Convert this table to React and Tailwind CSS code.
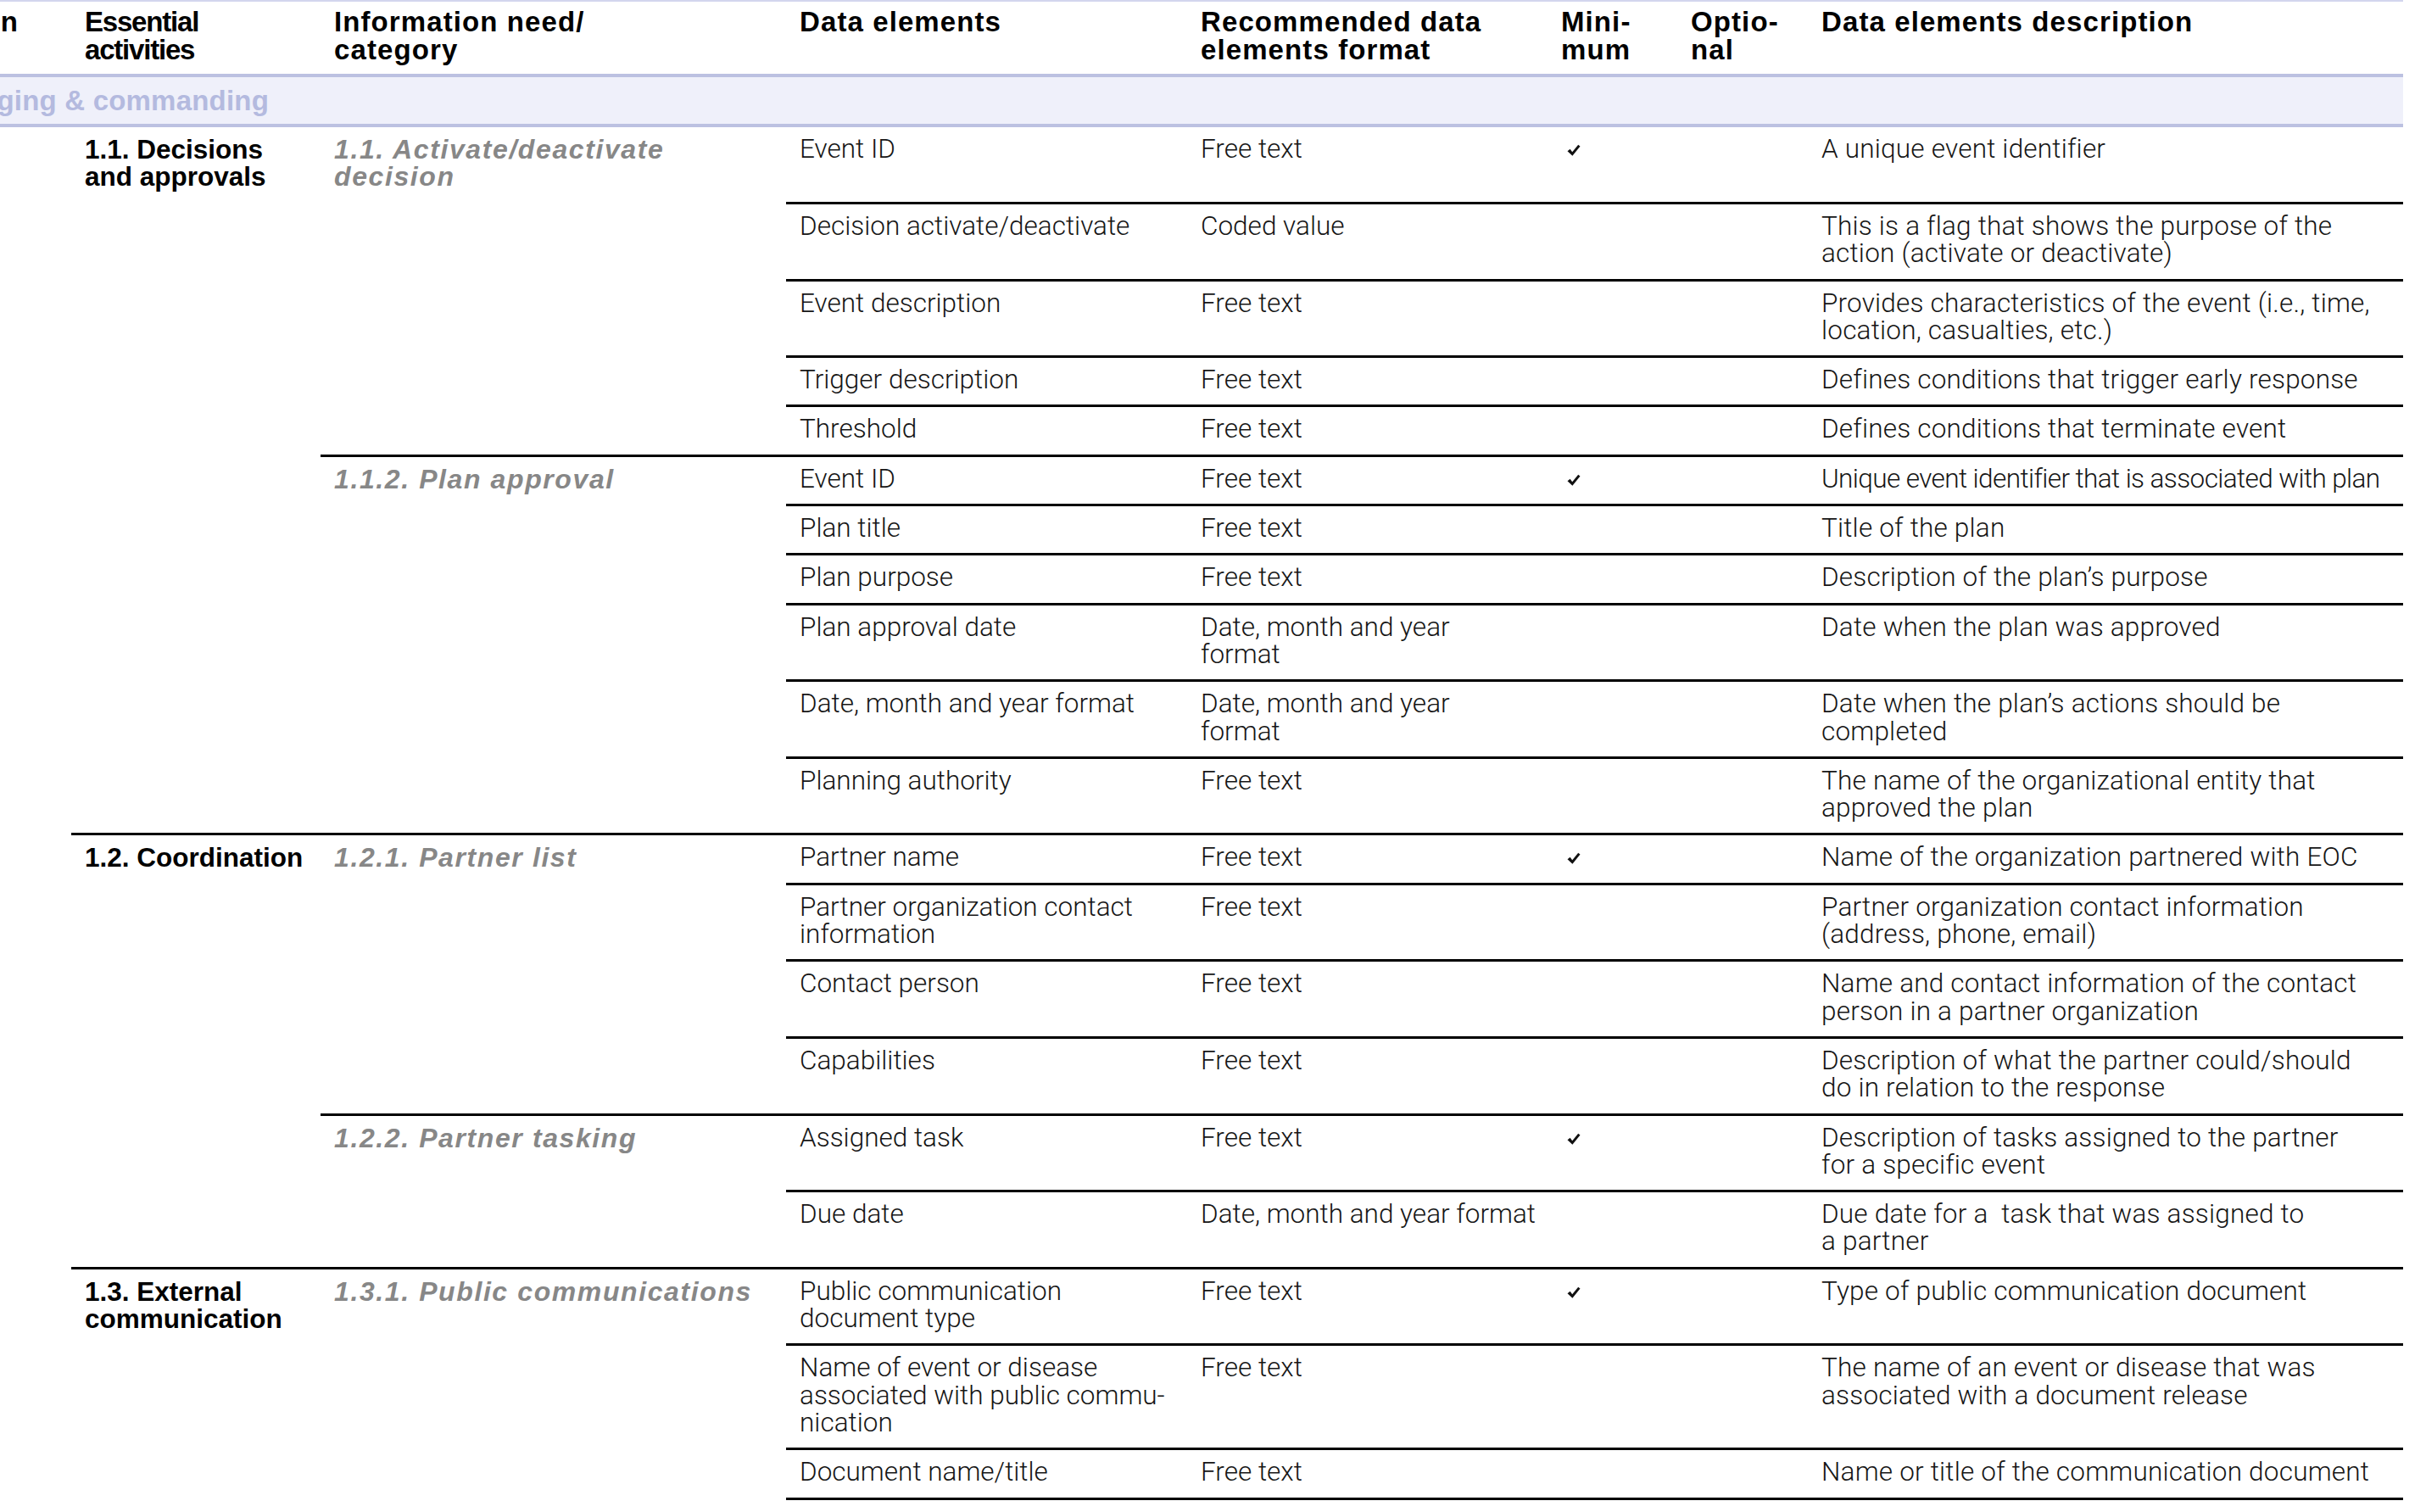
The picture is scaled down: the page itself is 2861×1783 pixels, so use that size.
import React from "react";

const CHECK = (
  <svg width="16" height="15" viewBox="0 0 16 15" className="block">
    <path d="M0.5 8.2 L3.6 5.8 L6.2 9.2 L13.2 0.8 L15.5 2.6 L6.4 13.8 Z" fill="#111" />
  </svg>
);

const data = [
  {
    act: ["1.1. Decisions", "and approvals"],
    subs: [
      {
        cat: ["1.1. Activate/deactivate", "decision"],
        rows: [
          { el: ["Event ID"], fmt: ["Free text"], min: true, desc: ["A unique event identifier"], tall: true },
          { el: ["Decision activate/deactivate"], fmt: ["Coded value"], desc: ["This is a flag that shows the purpose of the", "action (activate or deactivate)"] },
          { el: ["Event description"], fmt: ["Free text"], desc: ["Provides characteristics of the event (i.e., time,", "location, casualties, etc.)"] },
          { el: ["Trigger description"], fmt: ["Free text"], desc: ["Defines conditions that trigger early response"] },
          { el: ["Threshold"], fmt: ["Free text"], desc: ["Defines conditions that terminate event"] },
        ],
      },
      {
        cat: ["1.1.2. Plan approval"],
        rows: [
          { el: ["Event ID"], fmt: ["Free text"], min: true, desc: ["Unique event identifier that is associated with plan"], tight: true },
          { el: ["Plan title"], fmt: ["Free text"], desc: ["Title of the plan"] },
          { el: ["Plan purpose"], fmt: ["Free text"], desc: ["Description of the plan\u2019s purpose"] },
          { el: ["Plan approval date"], fmt: ["Date, month and year", "format"], desc: ["Date when the plan was approved"] },
          { el: ["Date, month and year format"], fmt: ["Date, month and year", "format"], desc: ["Date when the plan\u2019s actions should be", "completed"] },
          { el: ["Planning authority"], fmt: ["Free text"], desc: ["The name of the organizational entity that", "approved the plan"] },
        ],
      },
    ],
  },
  {
    act: ["1.2. Coordination"],
    subs: [
      {
        cat: ["1.2.1. Partner list"],
        rows: [
          { el: ["Partner name"], fmt: ["Free text"], min: true, desc: ["Name of the organization partnered with EOC"] },
          { el: ["Partner organization contact", "information"], fmt: ["Free text"], desc: ["Partner organization contact information", "(address, phone, email)"] },
          { el: ["Contact person"], fmt: ["Free text"], desc: ["Name and contact information of the contact", "person in a partner organization"] },
          { el: ["Capabilities"], fmt: ["Free text"], desc: ["Description of what the partner could/should", "do in relation to the response"] },
        ],
      },
      {
        cat: ["1.2.2. Partner tasking"],
        rows: [
          { el: ["Assigned task"], fmt: ["Free text"], min: true, desc: ["Description of tasks assigned to the partner", "for a specific event"] },
          { el: ["Due date"], fmt: ["Date, month and year format"], desc: ["Due date for a\u00a0 task that was assigned to", "a partner"] },
        ],
      },
    ],
  },
  {
    act: ["1.3. External", "communication"],
    subs: [
      {
        cat: ["1.3.1. Public communications"],
        rows: [
          { el: ["Public communication", "document type"], fmt: ["Free text"], min: true, desc: ["Type of public communication document"] },
          { el: ["Name of event or disease", "associated with public commu-", "nication"], fmt: ["Free text"], desc: ["The name of an event or disease that was", "associated with a document release"] },
          { el: ["Document name/title"], fmt: ["Free text"], desc: ["Name or title of the communication document"], last: true },
        ],
      },
    ],
  },
];

function Lines({ lines }) {
  return (
    <div className="whitespace-nowrap">
      {lines.map((l, i) => (
        <React.Fragment key={i}>
          {i > 0 ? <br /> : null}
          {l}
        </React.Fragment>
      ))}
    </div>
  );
}

const bodyFont = { fontFamily: "Roboto, 'Liberation Sans', sans-serif" };
const boldFont = { fontFamily: "'Liberation Sans', Arial, sans-serif" };

function DataRow({ r, first }) {
  return (
    <div
      className={
        "flex pt-[10px] pb-[13px] text-[31.5px] leading-[32.3px] font-light text-[#161616] " +
        (first ? "" : "border-t-[3px] border-black ") +
        (r.tall ? "min-h-[88px] " : "") +
        (r.last ? "border-b-[3px] border-black" : "")
      }
      style={bodyFont}
    >
      <div className="w-[473px] shrink-0 pl-[16px]">
        <Lines lines={r.el} />
      </div>
      <div className="w-[425px] shrink-0 pl-[16px]">
        <Lines lines={r.fmt} />
      </div>
      <div className="w-[153px] shrink-0 pl-[23px] pt-[10px]">{r.min ? CHECK : null}</div>
      <div className="w-[154px] shrink-0" />
      <div className={"flex-1 pl-[16px] " + (r.tight ? "tracking-[-0.6px]" : "tracking-[0.2px]")}>
        <Lines lines={r.desc} />
      </div>
    </div>
  );
}

export default function App() {
  return (
    <div className="w-[2861px] h-[1783px] overflow-hidden bg-white">
      <div className="-ml-[130px] w-[2964px]">
        {/* Header */}
        <div
          className="flex border-t-[2px] border-[#d3d6ee] border-b-[4px] border-b-[#bcc1e1] pt-[7px] pb-[12px] text-[33px] leading-[33px] font-bold text-black tracking-[1.1px]"
          style={boldFont}
        >
          <div className="w-[214px] shrink-0 pl-[4px] whitespace-nowrap">Function</div>
          <div className="w-[294px] shrink-0 pl-[16px] tracking-[-1.2px]">
            <Lines lines={["Essential", "activities"]} />
          </div>
          <div className="w-[549px] shrink-0 pl-[16px]">
            <Lines lines={["Information need/", "category"]} />
          </div>
          <div className="w-[473px] shrink-0 pl-[16px]">
            <Lines lines={["Data elements"]} />
          </div>
          <div className="w-[425px] shrink-0 pl-[16px]">
            <Lines lines={["Recommended data", "elements format"]} />
          </div>
          <div className="w-[153px] shrink-0 pl-[16px]">
            <Lines lines={["Mini-", "mum"]} />
          </div>
          <div className="w-[154px] shrink-0 pl-[16px]">
            <Lines lines={["Optio-", "nal"]} />
          </div>
          <div className="flex-1 pl-[16px]">
            <Lines lines={["Data elements description"]} />
          </div>
        </div>

        {/* Section row */}
        <div
          className="bg-[#eff0fa] border-b-[4px] border-[#bcc1e1] pt-[11px] pb-[11px] pl-[4px] text-[33px] leading-[33px] font-bold text-[#b4badf] whitespace-nowrap tracking-[0.2px]"
          style={boldFont}
        >
          1. Managing &amp; commanding
        </div>

        {/* Body */}
        <div className="flex">
          <div className="w-[214px] shrink-0" />
          <div className="flex-1 flex flex-col">
            {data.map((a, ai) => (
              <div key={ai} className={"flex " + (ai ? "border-t-[3px] border-black" : "")}>
                <div
                  className="w-[294px] shrink-0 pl-[16px] pt-[10px] text-[31.5px] leading-[32.3px] font-bold text-black"
                  style={boldFont}
                >
                  <Lines lines={a.act} />
                </div>
                <div className="flex-1 flex flex-col">
                  {a.subs.map((s, si) => (
                    <div key={si} className={"flex " + (si ? "border-t-[3px] border-black" : "")}>
                      <div
                        className="w-[549px] shrink-0 pl-[16px] pt-[10px] text-[32px] leading-[32.3px] font-bold italic text-[#878787] tracking-[1.6px]"
                        style={boldFont}
                      >
                        <Lines lines={s.cat} />
                      </div>
                      <div className="flex-1 flex flex-col">
                        {s.rows.map((r, ri) => (
                          <DataRow key={ri} r={r} first={ri === 0} />
                        ))}
                      </div>
                    </div>
                  ))}
                </div>
              </div>
            ))}
          </div>
        </div>
      </div>
    </div>
  );
}
